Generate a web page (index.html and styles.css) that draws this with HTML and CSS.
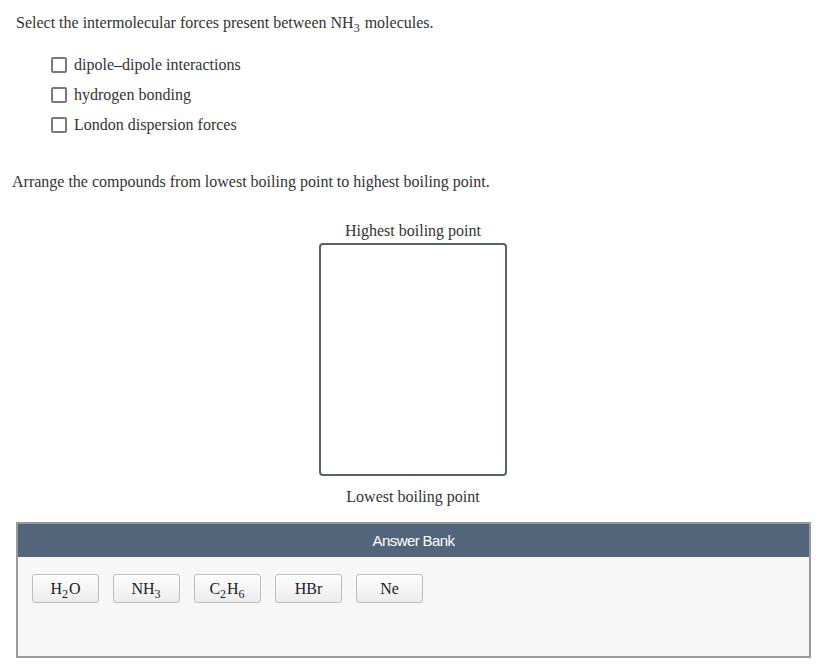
FILE: index.html
```html
<!DOCTYPE html>
<html lang="en">
<head>
  <meta charset="UTF-8">
  <title>Intermolecular Forces</title>
  <link rel="stylesheet" href="styles.css">
</head>
<body>

  <div class="pregunta">
    <p class="enunciado">Select the intermolecular forces present between NH<sub>3</sub> molecules.</p>
    <ul class="opciones">
      <li><span class="casilla"></span>dipole&ndash;dipole interactions</li>
      <li><span class="casilla"></span>hydrogen bonding</li>
      <li><span class="casilla"></span>London dispersion forces</li>
    </ul>
  </div>

  <div class="pregunta">
    <p class="enunciado orden">Arrange the compounds from lowest boiling point to highest boiling point.</p>
    <div class="ranking">
      <div class="etiqueta">Highest boiling point</div>
      <div class="caja"></div>
      <div class="etiqueta">Lowest boiling point</div>
    </div>

    <div class="banco">
      <div class="banco-titulo">Answer Bank</div>
      <div class="banco-items">
        <span class="ficha">H<sub>2</sub>O</span>
        <span class="ficha">NH<sub>3</sub></span>
        <span class="ficha">C<sub>2</sub>H<sub>6</sub></span>
        <span class="ficha">HBr</span>
        <span class="ficha">Ne</span>
      </div>
    </div>
  </div>

</body>
</html>
```

FILE: styles.css
```css
body {
  font-family: 'Liberation Serif', 'Times New Roman', serif;
  font-size: 16px;
  color: #333;
  background-color: #fff;
  margin: 0;
  padding: 0;
}
sub {
  font-size: 0.75em;
  vertical-align: -0.35em;
  line-height: 0;
  margin-right: 1px;
}
.enunciado {
  margin: 0;
  padding: 13px 0 0 16px;
  line-height: 20px;
}
.enunciado.orden {
  padding: 32px 0 0 12px;
}
.opciones {
  list-style: none;
  margin: 0;
  padding: 17px 0 0 51px;
}
.opciones li {
  display: flex;
  align-items: center;
  height: 30px;
}
.casilla {
  width: 12px;
  height: 12px;
  border: 2px solid #7a7a7a;
  border-radius: 2px;
  margin-right: 7px;
}
.ranking {
  display: flex;
  flex-direction: column;
  align-items: center;
  width: 188px;
  margin: 29px 0 0 319px;
}
.etiqueta {
  line-height: 20px;
}
.caja {
  width: 184px;
  height: 229px;
  border: 2px solid #56626e;
  border-radius: 4px;
  margin: 2px 0 11px;
}
.banco {
  margin: 15px 18px 0 16px;
  border: 2px solid #9a9a9a;
  background-color: #f7f7f7;
  height: 132px;
}
.banco-titulo {
  background-color: #53657b;
  color: #fff;
  font-family: 'Liberation Sans', Arial, sans-serif;
  font-size: 15px;
  letter-spacing: -0.6px;
  text-align: center;
  height: 33px;
  line-height: 33px;
}
.banco-items {
  display: flex;
  gap: 14px;
  padding: 17px 14px;
}
.ficha {
  display: block;
  width: 65px;
  height: 27px;
  line-height: 27px;
  text-align: center;
  border: 1px solid #bdbdbd;
  border-radius: 3px;
  background: linear-gradient(#fdfdfd, #ececec);
  color: #222;
}
```
